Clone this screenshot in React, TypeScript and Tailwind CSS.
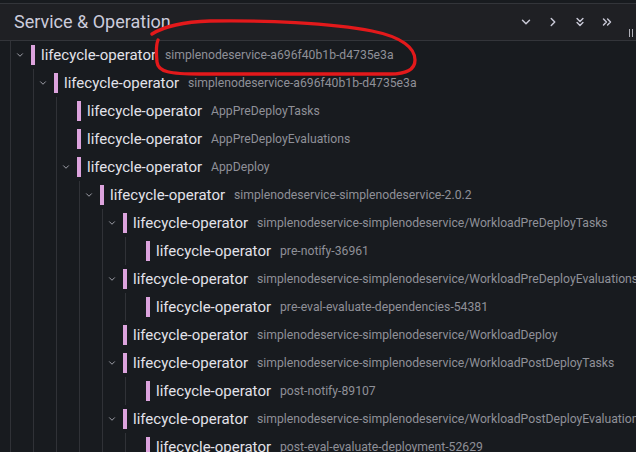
import { ChevronDown, ChevronRight, ChevronsDown, ChevronsRight } from 'lucide-react';

type Span = { level: number; open?: boolean; op: string };

const spans: Span[] = [
  { level: 1, open: true, op: 'simplenodeservice-a696f40b1b-d4735e3a' },
  { level: 2, open: true, op: 'simplenodeservice-a696f40b1b-d4735e3a' },
  { level: 3, op: 'AppPreDeployTasks' },
  { level: 3, op: 'AppPreDeployEvaluations' },
  { level: 3, open: true, op: 'AppDeploy' },
  { level: 4, open: true, op: 'simplenodeservice-simplenodeservice-2.0.2' },
  { level: 5, open: true, op: 'simplenodeservice-simplenodeservice/WorkloadPreDeployTasks' },
  { level: 6, op: 'pre-notify-36961' },
  { level: 5, open: true, op: 'simplenodeservice-simplenodeservice/WorkloadPreDeployEvaluations' },
  { level: 6, op: 'pre-eval-evaluate-dependencies-54381' },
  { level: 5, op: 'simplenodeservice-simplenodeservice/WorkloadDeploy' },
  { level: 5, open: true, op: 'simplenodeservice-simplenodeservice/WorkloadPostDeployTasks' },
  { level: 6, op: 'post-notify-89107' },
  { level: 5, open: true, op: 'simplenodeservice-simplenodeservice/WorkloadPostDeployEvaluations' },
  { level: 6, op: 'post-eval-evaluate-deployment-52629' },
];

function SpanRow({ span }: { span: Span }) {
  const guides = Array.from({ length: span.level - 1 });
  return (
    <div className="flex items-center h-[28px] whitespace-nowrap">
      {guides.map((_, i) => (
        <div key={i} className="w-[23px] h-full shrink-0 pl-[10px]">
          <div className="h-full border-l border-[#303237]" />
        </div>
      ))}
      <div className="w-[31px] h-full shrink-0 flex items-center">
        <div className="ml-[10px] w-[5px] h-full border-l border-[#303237]" />
        <div className="w-[10px] flex justify-center">
          {span.open && <ChevronDown size={12} strokeWidth={2} className="text-[#b9bac4]" />}
        </div>
      </div>
      <div className="w-[4px] h-[20px] shrink-0 bg-[#dca3dd]" />
      <span className="ml-[6px] text-[15px] text-[#e2e2ea]">lifecycle-operator</span>
      <span className="ml-[9px] text-[12.2px] text-[#8f9098]">{span.op}</span>
    </div>
  );
}

export default function App() {
  return (
    <div
      className="relative w-[636px] h-[452px] overflow-hidden bg-[#181b1f]"
      style={{ fontFamily: 'Roboto, "Noto Sans", sans-serif' }}
    >
      <div className="h-[3px]" />
      {/* header */}
      <div className="relative h-[38px] flex items-center pl-[14px] pr-[22px] bg-[#1f2024] border-t border-b border-[#33353a]">
        <h2 className="text-[18px] text-[#ccccdc] flex-1 -mt-[1px]">Service &amp; Operation</h2>
        <div className="flex items-center gap-[13px] text-[#c8c8d6]">
          <ChevronDown size={14} strokeWidth={2.5} />
          <ChevronRight size={14} strokeWidth={2.5} />
          <ChevronsDown size={14} strokeWidth={2.5} />
          <ChevronsRight size={14} strokeWidth={2.5} />
        </div>
        <div className="absolute right-[3px] bottom-[3px] flex gap-[2px]">
          <div className="w-px h-[8px] bg-[#b0b0b8]" />
          <div className="w-px h-[8px] bg-[#b0b0b8]" />
        </div>
      </div>

      {/* span tree */}
      <div className="flex flex-col">
        {spans.map((s, i) => (
          <SpanRow key={i} span={s} />
        ))}
      </div>

      {/* red annotation */}
      <svg className="absolute inset-0 pointer-events-none" width="636" height="452">
        <path
          d="M152,34 C163,27 182,22 210,21 C262,20 332,23 372,31 C402,37 415,48 415,60 C415,70 406,74 390,74 L200,74 C170,74 158,72 157,62 C156,52 156,45 158,40"
          fill="none"
          stroke="#e3191b"
          strokeWidth="3.3"
          strokeLinecap="round"
        />
      </svg>
    </div>
  );
}
